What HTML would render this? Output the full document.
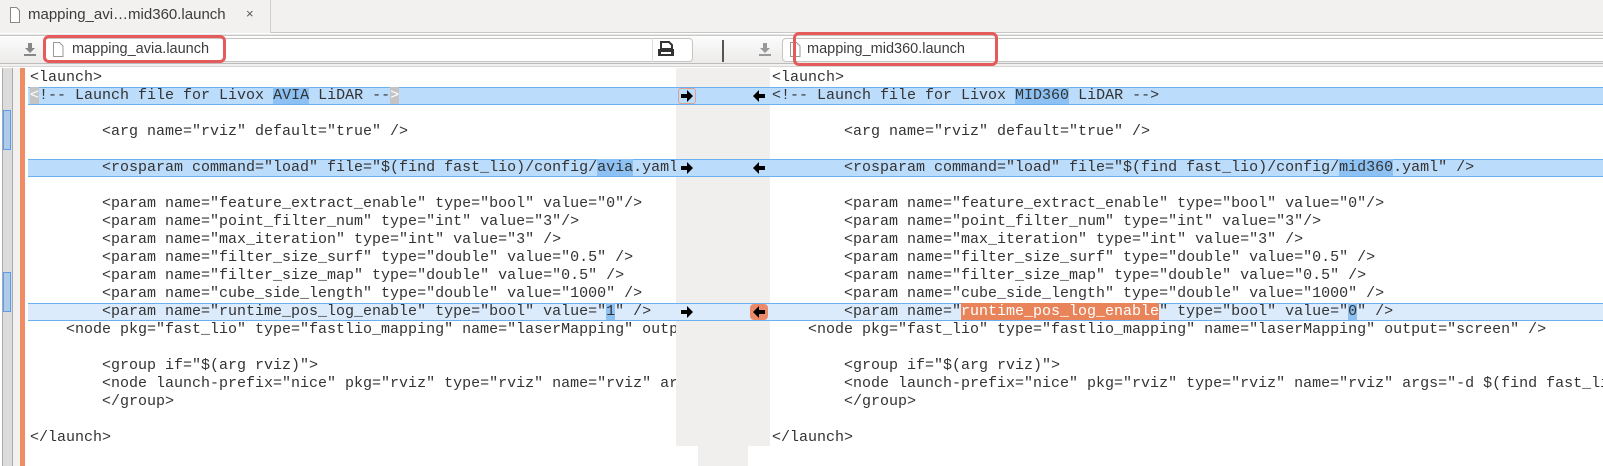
<!DOCTYPE html>
<html><head><meta charset="utf-8"><style>
*{margin:0;padding:0;box-sizing:border-box}
body{width:1603px;height:466px;overflow:hidden;background:#fff;position:relative;font-family:"Liberation Sans",sans-serif}
.abs{position:absolute}
.code{font-family:"Liberation Mono",monospace;font-size:15px;color:#333;white-space:pre;line-height:18px}
.row{position:absolute;left:28px;right:0;height:18px}
.hb{background:#bcdcfb;border-top:1px solid #6bb0f0;border-bottom:1px solid #6bb0f0}
.hl{background:#dcebfc;border-top:1px solid #6bb0f0;border-bottom:1px solid #6bb0f0}
.w{background:#8dc1f3}
.o{background:#e9845a;color:#fff}
.g{background:#c4c4c4;color:#fff}
.pane{position:absolute;top:69px;overflow:hidden}
.ui{font-size:14.5px;color:#3c3c3c}
</style></head><body>
<div class="abs" style="left:0;top:0;width:1603px;height:33px;background:#f2f1f0;border-bottom:1px solid #c8c7c5"></div>
<div class="abs" style="left:0;top:0;width:271px;height:33px;background:#f2f1f0;border-right:1px solid #d0cfcd"></div>
<svg class="abs" style="left:9px;top:7px" width="12" height="16"><path d="M1.5 .5h6l3 3v12h-9z" fill="#fff" stroke="#888"/></svg>
<div class="abs ui" style="left:28px;top:6px;font-size:15px">mapping_avi…mid360.launch</div>
<div class="abs" style="left:246px;top:6px;font-size:13px;color:#555">×</div>
<div class="abs" style="left:0;top:34px;width:1603px;height:2px;background:#e8e8e6;border-bottom:1px solid #c8c7c5"></div>
<div class="abs" style="left:0;top:37px;width:1603px;height:27px;background:linear-gradient(#fbfbfb,#ecebea);border-bottom:1px solid #bdbcba"></div>
<div class="abs" style="left:0;top:64px;width:1603px;height:3px;background:#f2f1f0;border-bottom:1px solid #d6d5d3"></div>
<svg class="abs" style="left:24px;top:43px" width="12" height="13"><path d="M4 0h4v5h3l-5 5-5-5h3z" fill="#888"/><rect x="0" y="11" width="12" height="2" fill="#888"/></svg>
<div class="abs" style="left:43px;top:38px;width:650px;height:24px;background:#fff;border:1px solid #c6c5c3;border-radius:4px"></div>
<div class="abs" style="left:652px;top:38px;width:41px;height:24px;border-left:1px solid #ddd"></div>
<svg class="abs" style="left:657px;top:41px" width="18" height="16"><path d="M4 1h8l3 3v4H4z" fill="none" stroke="#333" stroke-width="2"/><rect x="1" y="8" width="16" height="7" fill="#333"/><rect x="4" y="11" width="10" height="2" fill="#fff"/></svg>
<div class="abs" style="left:43px;top:35px;width:183px;height:28px;border:3px solid #e55a5a;border-radius:6px"></div>
<svg class="abs" style="left:53px;top:42px" width="11" height="15"><path d="M.5 .5h6l3.5 3.5v10.5h-9.5z" fill="#fff" stroke="#999"/></svg>
<div class="abs ui" style="left:72px;top:41px;font-size:14.5px">mapping_avia.launch</div>
<div class="abs" style="left:722px;top:40px;width:2px;height:22px;background:#555"></div>
<svg class="abs" style="left:759px;top:43px" width="12" height="13"><path d="M4 0h4v5h3l-5 5-5-5h3z" fill="#999"/><rect x="0" y="11" width="12" height="2" fill="#999"/></svg>
<div class="abs" style="left:782px;top:38px;width:830px;height:24px;background:#fff;border:1px solid #c6c5c3;border-radius:4px"></div>
<svg class="abs" style="left:790px;top:42px" width="11" height="15"><path d="M.5 .5h6l3.5 3.5v10.5h-9.5z" fill="#fff" stroke="#999"/></svg>
<div class="abs" style="left:793px;top:32px;width:205px;height:34px;border:3px solid #e55a5a;border-radius:6px"></div>
<div class="abs ui" style="left:807px;top:41px">mapping_mid360.launch</div>
<div class="abs" style="left:2px;top:68px;width:11px;height:398px;background:#dcdcdc;border-left:1px solid #aaa;border-right:1px solid #aaa"></div>
<div class="abs" style="left:3px;top:110px;width:8px;height:40px;background:#aecbec;border:1px solid #5a9ce6"></div>
<div class="abs" style="left:3px;top:272px;width:8px;height:40px;background:#aecbec;border:1px solid #5a9ce6"></div>
<div class="abs" style="left:13px;top:68px;width:7px;height:398px;background:#f2f1f0"></div>
<div class="abs" style="left:20px;top:68px;width:5px;height:398px;background:#f08c64"></div>
<div class="row hb" style="top:87px"></div>
<div class="row hb" style="top:159px"></div>
<div class="row hl" style="top:303px"></div>
<div class="abs" style="left:676px;top:68px;width:94px;height:19px;background:#f0efee"></div>
<div class="abs" style="left:676px;top:105px;width:94px;height:54px;background:#f0efee"></div>
<div class="abs" style="left:676px;top:177px;width:94px;height:126px;background:#f0efee"></div>
<div class="abs" style="left:676px;top:321px;width:94px;height:125px;background:#f0efee"></div>
<div class="abs" style="left:698px;top:446px;width:50px;height:20px;background:#f0efee"></div>
<div class="abs" style="left:678px;top:88px;width:18px;height:16px;border:1px solid #e0a08a;border-radius:3px"></div>
<div class="abs" style="left:750px;top:304px;width:18px;height:16px;background:#ea8a66;border-radius:4px"></div>
<svg class="abs" style="left:0;top:0" width="1603" height="466">
<defs><path id="r" d="M0 -2h6v-4l6 6-6 6v-4h-6z" fill="#000"/><path id="l" d="M12 -2h-6v-4l-6 6 6 6v-4h6z" fill="#000"/></defs>
<use href="#r" x="681" y="96"/><use href="#l" x="753" y="96"/>
<use href="#r" x="681" y="168"/><use href="#l" x="753" y="168"/>
<use href="#r" x="681" y="312"/><use href="#l" x="753" y="312"/>
</svg>
<div class="pane code" style="left:30px;width:646px">&lt;launch&gt;
<span class="g">&lt;</span>!-- Launch file for Livox <span class="w">AVIA</span> LiDAR --<span class="g">&gt;</span>

        &lt;arg name="rviz" default="true" /&gt;

        &lt;rosparam command="load" file="$(find fast_lio)/config/<span class="w">avia</span>.yaml" /&gt;

        &lt;param name="feature_extract_enable" type="bool" value="0"/&gt;
        &lt;param name="point_filter_num" type="int" value="3"/&gt;
        &lt;param name="max_iteration" type="int" value="3" /&gt;
        &lt;param name="filter_size_surf" type="double" value="0.5" /&gt;
        &lt;param name="filter_size_map" type="double" value="0.5" /&gt;
        &lt;param name="cube_side_length" type="double" value="1000" /&gt;
        &lt;param name="runtime_pos_log_enable" type="bool" value="<span class="w">1</span>" /&gt;
    &lt;node pkg="fast_lio" type="fastlio_mapping" name="laserMapping" output="screen" /&gt;

        &lt;group if="$(arg rviz)"&gt;
        &lt;node launch-prefix="nice" pkg="rviz" type="rviz" name="rviz" args="-d $(find fast_lio)/rviz_cfg/loam_livox.rviz" /&gt;
        &lt;/group&gt;

&lt;/launch&gt;</div>
<div class="pane code" style="left:772px;width:831px">&lt;launch&gt;
&lt;!-- Launch file for Livox <span class="w">MID360</span> LiDAR --&gt;

        &lt;arg name="rviz" default="true" /&gt;

        &lt;rosparam command="load" file="$(find fast_lio)/config/<span class="w">mid360</span>.yaml" /&gt;

        &lt;param name="feature_extract_enable" type="bool" value="0"/&gt;
        &lt;param name="point_filter_num" type="int" value="3"/&gt;
        &lt;param name="max_iteration" type="int" value="3" /&gt;
        &lt;param name="filter_size_surf" type="double" value="0.5" /&gt;
        &lt;param name="filter_size_map" type="double" value="0.5" /&gt;
        &lt;param name="cube_side_length" type="double" value="1000" /&gt;
        &lt;param name="<span class="o">runtime_pos_log_enable</span>" type="bool" value="<span class="w">0</span>" /&gt;
    &lt;node pkg="fast_lio" type="fastlio_mapping" name="laserMapping" output="screen" /&gt;

        &lt;group if="$(arg rviz)"&gt;
        &lt;node launch-prefix="nice" pkg="rviz" type="rviz" name="rviz" args="-d $(find fast_lio)/rviz_cfg/loam_livox.rviz" /&gt;
        &lt;/group&gt;

&lt;/launch&gt;</div>
</body></html>
